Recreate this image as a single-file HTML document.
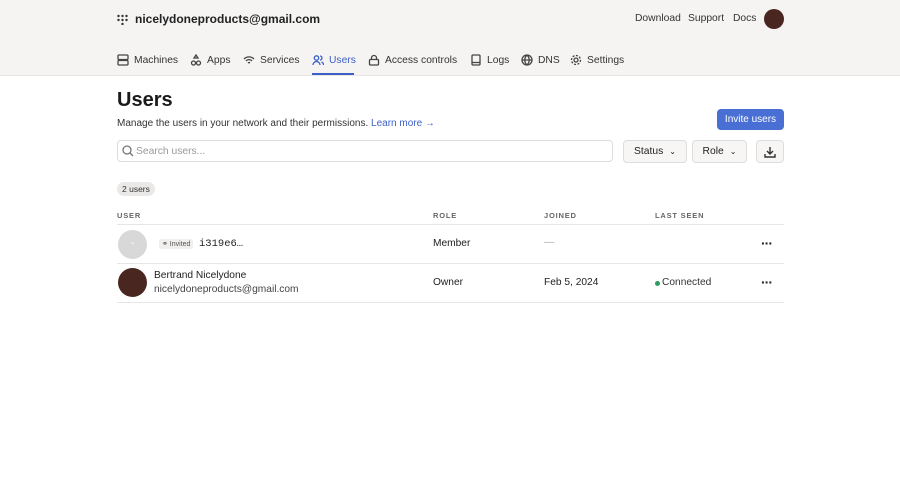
<!DOCTYPE html>
<html><head><style>
*{box-sizing:border-box;margin:0;padding:0}
body{width:900px;height:484px;background:#fff;font-family:"Liberation Sans",sans-serif;color:#222;position:relative;overflow:hidden}
.hdr{position:absolute;left:0;top:0;width:900px;height:76px;background:#f5f4f3;border-bottom:1px solid #e8e6e4}
.abs{position:absolute;white-space:nowrap}
.tab{position:absolute;top:54px;font-size:10.3px;color:#333;display:flex;align-items:center;gap:5px}
.tab svg{width:12px;height:12px;fill:none;stroke:#444;stroke-width:1.3}
.btn{position:absolute;border:1px solid #ddd;border-radius:4px;background:#f7f6f5;font-size:10.3px;display:flex;align-items:center;justify-content:center;gap:6px}
.th{position:absolute;top:211px;font-size:7.5px;letter-spacing:.8px;color:#666;font-weight:bold}
.line{position:absolute;left:117px;width:667px;height:1px;background:#e8e6e4}
.cell{position:absolute;font-size:10.2px;color:#222}
</style></head><body>
<div class="hdr"></div>
<svg class="abs" style="left:117px;top:14px" width="11" height="11"><g fill="#333"><circle cx="1.5" cy="2" r="1.2"/><circle cx="5.5" cy="2" r="1.2"/><circle cx="9.5" cy="2" r="1.2"/><circle cx="1.5" cy="6" r="1.2"/><circle cx="5.5" cy="6" r="1.2"/><circle cx="9.5" cy="6" r="1.2"/><circle cx="5.5" cy="10" r="1.2"/></g></svg>
<div class="abs" style="left:135px;top:12px;font-size:12px;font-weight:bold;color:#222">nicelydoneproducts@gmail.com</div>
<div class="abs" style="left:635px;top:13px;font-size:10.3px;color:#333">Download</div>
<div class="abs" style="left:688px;top:13px;font-size:10.3px;color:#333">Support</div>
<div class="abs" style="left:733px;top:13px;font-size:10.3px;color:#333">Docs</div>
<div class="abs" style="left:764px;top:9px;width:20px;height:20px;border-radius:50%;background:#4a2620"></div>

<div class="tab" style="left:117px"><svg viewBox="0 0 12 12"><rect x="1" y="1" width="10" height="4.5" rx="1"/><rect x="1" y="6.5" width="10" height="4.5" rx="1"/></svg>Machines</div>
<div class="tab" style="left:190px"><svg viewBox="0 0 12 12"><path d="M6 1l2 3H4z"/><circle cx="3.5" cy="9" r="2"/><circle cx="8.5" cy="9" r="2"/></svg>Apps</div>
<div class="tab" style="left:243px"><svg viewBox="0 0 12 12"><path d="M1 5a7 7 0 0 1 10 0M3 7a4 4 0 0 1 6 0M5 9a1.5 1.5 0 0 1 2 0"/></svg>Services</div>
<div class="tab" style="left:312px;color:#3c5fc7"><svg viewBox="0 0 12 12" style="stroke:#3c5fc7"><circle cx="4.5" cy="4" r="2.2"/><path d="M1 11a3.5 3.5 0 0 1 7 0M8 2a2 2 0 0 1 0 4M9.5 8a3 3 0 0 1 2 3"/></svg>Users</div>
<div class="abs" style="left:312px;top:73px;width:42px;height:2px;background:#3c5fc7"></div>
<div class="tab" style="left:368px"><svg viewBox="0 0 12 12"><rect x="1.5" y="5.5" width="9" height="5.5" rx="1"/><path d="M3.5 5.5V4a2.5 2.5 0 0 1 5 0v1.5"/></svg>Access controls</div>
<div class="tab" style="left:470px"><svg viewBox="0 0 12 12"><rect x="2" y="1" width="8" height="10" rx="1"/><path d="M2 8.5h8"/></svg>Logs</div>
<div class="tab" style="left:521px"><svg viewBox="0 0 12 12"><circle cx="6" cy="6" r="5"/><path d="M1 6h10M6 1c-3 3-3 7 0 10M6 1c3 3 3 7 0 10"/></svg>DNS</div>
<div class="tab" style="left:570px"><svg viewBox="0 0 12 12"><circle cx="6" cy="6" r="2"/><circle cx="6" cy="6" r="4.5" stroke-dasharray="2 1.5"/></svg>Settings</div>

<div class="abs" style="left:117px;top:89px;font-size:20px;font-weight:bold;color:#1a1a1a">Users</div>
<div class="abs" style="left:117px;top:118px;font-size:10px;color:#333">Manage the users in your network and their permissions. <span style="color:#3c5fc7">Learn more →</span></div>
<div class="btn" style="left:717px;top:109px;width:67px;height:21px;background:#4a6fd4;border-color:#4a6fd4;color:#fff;font-size:10px">Invite users</div>

<div class="abs" style="left:117px;top:140px;width:496px;height:22px;border:1px solid #ddd;border-radius:4px;background:#fff"></div>
<svg class="abs" style="left:122px;top:145px" width="12" height="12" fill="none" stroke="#777" stroke-width="1.3"><circle cx="5" cy="5" r="4"/><path d="M8 8l3 3"/></svg>
<div class="abs" style="left:136px;top:146px;font-size:10.3px;color:#999">Search users...</div>
<div class="btn" style="left:623px;top:140px;width:64px;height:23px">Status <span style="font-size:8px">⌄</span></div>
<div class="btn" style="left:692px;top:140px;width:55px;height:23px">Role <span style="font-size:8px">⌄</span></div>
<div class="btn" style="left:756px;top:140px;width:28px;height:23px"><svg width="12" height="12" fill="none" stroke="#333" stroke-width="1.4"><path d="M6 1v7M3 5l3 3 3-3M1 8v3h10V8"/></svg></div>

<div class="abs" style="left:117px;top:182px;padding:2px 5px;border-radius:8px;background:#ebe9e7;font-size:8.5px;color:#333">2 users</div>

<div class="th" style="left:117px">USER</div>
<div class="th" style="left:433px">ROLE</div>
<div class="th" style="left:544px">JOINED</div>
<div class="th" style="left:655px">LAST SEEN</div>
<div class="line" style="top:224px"></div>
<div class="line" style="top:263px"></div>
<div class="line" style="top:302px"></div>

<div class="abs" style="left:118px;top:230px;width:29px;height:29px;border-radius:50%;background:#d8d8d8;color:#fff;font-size:10px;text-align:center;line-height:28px">-</div>
<div class="abs" style="left:159px;top:239px;padding:1px 3px;background:#f0efee;border-radius:2px;font-size:7px;color:#555">⚭ Invited</div>
<div class="cell" style="left:199px;top:238px;font-family:'Liberation Mono',monospace;font-size:10.5px">i319e6…</div>
<div class="cell" style="left:433px;top:238px">Member</div>
<div class="cell" style="left:544px;top:237px;color:#aaa">—</div>
<div class="cell" style="left:761px;top:235px;font-size:14px;font-weight:bold;letter-spacing:-1px">···</div>

<div class="abs" style="left:118px;top:268px;width:29px;height:29px;border-radius:50%;background:#4a2620"></div>
<div class="cell" style="left:154px;top:270px">Bertrand Nicelydone</div>
<div class="cell" style="left:154px;top:284px;color:#444">nicelydoneproducts@gmail.com</div>
<div class="cell" style="left:433px;top:277px">Owner</div>
<div class="cell" style="left:544px;top:277px">Feb 5, 2024</div>
<div class="abs" style="left:655px;top:281px;width:5px;height:5px;border-radius:50%;background:#2e9e5e"></div>
<div class="cell" style="left:662px;top:277px;color:#333">Connected</div>
<div class="cell" style="left:761px;top:274px;font-size:14px;font-weight:bold;letter-spacing:-1px">···</div>
</body></html>
